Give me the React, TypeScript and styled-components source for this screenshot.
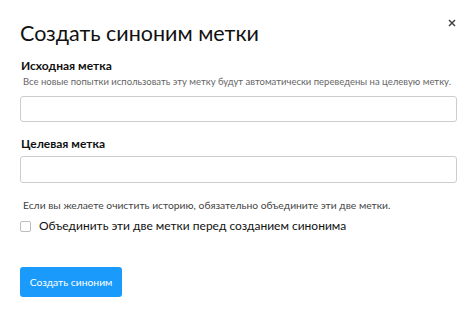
import React from "react";
import styled, { createGlobalStyle } from "styled-components";

const Global = createGlobalStyle`
  html, body { margin: 0; padding: 0; background: #fff; }
  body { font-family: Lato, "Open Sans", sans-serif; color: #212529; }
  * { box-sizing: border-box; }
`;

const Modal = styled.div`
  width: 474px;
  height: 316px;
  padding: 0 17px 0 20px;
  display: flex;
  flex-direction: column;
`;

const Header = styled.div`
  display: flex;
  justify-content: space-between;
  align-items: flex-start;
  padding-top: 17px;
`;

const Title = styled.h1`
  margin: 0;
  font-size: 21.5px;
  font-weight: 400;
  line-height: 32px;
  color: #111;
`;

const Close = styled.button`
  border: 0;
  background: none;
  padding: 0;
  margin: 1px 0 0 0;
  width: 10px;
  height: 10px;
  display: flex;
  cursor: pointer;
`;

const Field = styled.div<{ $top: number }>`
  margin-top: ${(p) => p.$top}px;
  display: flex;
  flex-direction: column;
`;

const Label = styled.label`
  font-size: 12px;
  font-weight: 700;
  line-height: 16px;
  color: #111;
  margin-left: 1px;
`;

const Help = styled.div<{ $top?: number; $small?: boolean }>`
  font-size: ${(p) => (p.$small ? "9.5px" : "10.3px")};
  line-height: 12px;
  color: ${(p) => (p.$small ? "#666" : "#444")};
  margin-left: 3px;
  white-space: nowrap;
  margin-top: ${(p) => p.$top ?? 0}px;
`;

const Input = styled.input<{ $top: number; $h: number }>`
  margin-top: ${(p) => p.$top}px;
  width: 437px;
  height: ${(p) => p.$h}px;
  border: 1px solid #cdcdcd;
  border-radius: 3px;
  font: inherit;
  padding: 0 8px;
`;

const CheckRow = styled.label`
  display: flex;
  align-items: center;
  gap: 8px;
  margin-top: 7px;
  font-size: 12px;
  line-height: 16px;
  color: #111;
`;

const Box = styled.span`
  width: 11px;
  height: 11px;
  border: 1px solid #bdbdbd;
  border-radius: 2px;
  background: #fff;
`;

const Button = styled.button`
  margin-top: 33px;
  align-self: flex-start;
  width: 102px;
  height: 30px;
  padding: 0;
  border: 0;
  border-radius: 3px;
  background: #1a9bfb;
  color: #fff;
  font-family: inherit;
  font-size: 10.3px;
  cursor: pointer;
`;

export default function App() {
  return (
    <>
      <Global />
      <Modal>
        <Header>
          <Title>Создать синоним метки</Title>
          <Close aria-label="Закрыть">
            <svg width="10" height="10" viewBox="0 0 10 10">
              <path d="M2 2 L8 8 M8 2 L2 8" stroke="#444" strokeWidth="1.5" />
            </svg>
          </Close>
        </Header>
        <Field $top={9}>
          <Label>Исходная метка</Label>
          <Help $top={2} $small>Все новые попытки использовать эту метку будут автоматически переведены на целевую метку.</Help>
          <Input $top={8} $h={26} />
        </Field>
        <Field $top={14}>
          <Label>Целевая метка</Label>
          <Input $top={4} $h={27} />
        </Field>
        <Help $top={16}>Если вы желаете очистить историю, обязательно объедините эти две метки.</Help>
        <CheckRow>
          <Box />
          Объединить эти две метки перед созданием синонима
        </CheckRow>
        <Button>Создать синоним</Button>
      </Modal>
    </>
  );
}
